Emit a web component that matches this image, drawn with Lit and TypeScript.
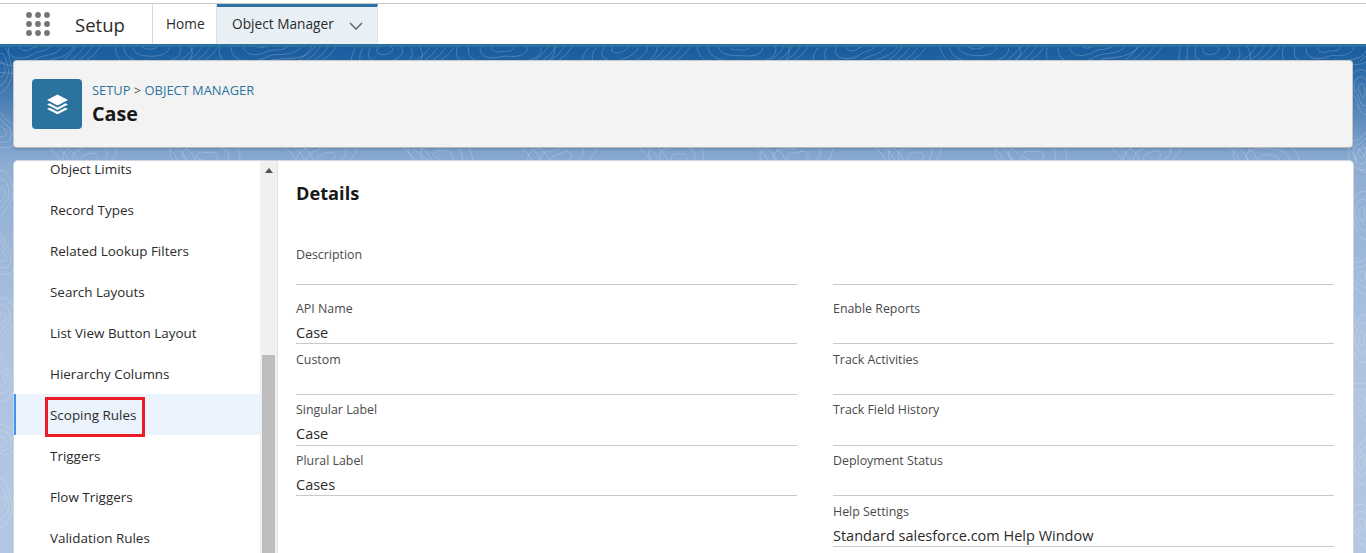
import { LitElement, html, css, svg } from "lit";
import { customElement } from "lit/decorators.js";

const MENU = ["Object Limits","Record Types","Related Lookup Filters","Search Layouts","List View Button Layout","Hierarchy Columns","Scoping Rules","Triggers","Flow Triggers","Validation Rules"];
const LEFT: [string,string,boolean?][] = [["Description","",true],["API Name","Case"],["Custom",""],["Singular Label","Case"],["Plural Label","Cases"]];
const RIGHT: [string,string,boolean?][] = [["","",true],["Enable Reports",""],["Track Activities",""],["Track Field History",""],["Deployment Status",""],["Help Settings","Standard salesforce.com Help Window"]];

/* Decorative topographic texture: concentric wobbly rings and diagonal hatching. */
function ring(cx: number, cy: number, r: number, seed: number, sx: number): string {
  const pts: string[] = [];
  for (let i = 0; i < 40; i++) {
    const a = (i / 40) * Math.PI * 2;
    const w = 1 + 0.2 * Math.sin(a * 2 + seed) + 0.12 * Math.sin(a * 3 + seed * 2.3);
    pts.push(`${(cx + Math.cos(a) * r * w * sx).toFixed(1)} ${(cy + Math.sin(a) * r * w).toFixed(1)}`);
  }
  return "M" + pts.join("L") + "Z";
}
function buildContours(): string[] {
  const out: string[] = [];
  let s = 1.7;
  const blob = (x: number, y: number, max: number, sx = 1.5) => {
    s += 1.37;
    for (let r = 6; r <= max; r += 7) out.push(ring(x, y, r, s, sx));
  };
  const hatch = (x: number, y: number, n: number, dx = -14, dy = 14, step = 8) => {
    for (let i = 0; i < n; i++) out.push(`M${x + i * step} ${y}q${dx / 2 + 3} ${dy / 2} ${dx} ${dy}`);
  };
  for (let x = 30; x < 1366; x += 118) {
    blob(x, 42 + (x % 7), 30);
    hatch(x + 46, 47, 4);
    blob(x + 60, 160 - (x % 5), 26);
    hatch(x + 20, 148, 3, 10, 13, 9);
  }
  for (let y = 70; y < 553; y += 62) {
    blob(2, y, 26, 0.55);
    blob(1362, y + 20, 26, 0.55);
  }
  return out;
}
const CONTOURS = buildContours();

@customElement("app-root")
export class AppRoot extends LitElement {
  static styles = css`
    :host { display: block; width: 1366px; height: 553px; overflow: hidden; position: relative; font-family: "Open Sans", "Noto Sans", sans-serif; color: #181818; }
    .page { height: 553px; display: flex; flex-direction: column; background: #fff; }
    .topline { height: 4px; box-sizing: border-box; border-bottom: 1px solid #c9c9c9; flex: none; }
    nav { height: 40px; flex: none; display: flex; align-items: stretch; background: #fff; }
    .launcher { width: 75px; flex: none; display: flex; align-items: center; padding-left: 26px; box-sizing: border-box; }
    .launcher svg { display: block; }
    .app { width: 77px; flex: none; box-sizing: border-box; font-size: 18.5px; line-height: 41px; color: #2b2b2b; }
    .tab { box-sizing: border-box; font-size: 13.7px; display: flex; align-items: center; color: #2b2b2b; }
    .home { width: 65px; border-left: 1px solid #dddbda; border-right: 1px solid #dddbda; padding-left: 13px; padding-bottom: 1px; }
    .om { width: 161px; background: #e8f0f5; border-top: 3px solid #2a739e; border-right: 1px solid #dce4ea; padding-left: 15px; padding-bottom: 4px; }
    .om svg { margin-left: 15px; margin-top: 4px; }
    .stage { flex: 1; min-height: 0; position: relative; background: linear-gradient(#1b5e9f 0, #1b5e9f 6px, #8eadd3 118px, #aec3e0 300px, #b3c7e2 100%); border-top: 3px solid #2a739e; padding: 13px 13px 0 13px; display: flex; flex-direction: column; gap: 13px; box-sizing: border-box; overflow: hidden; }
    .contours { position: absolute; left: 0; top: -47px; width: 1366px; height: 553px; pointer-events: none; }
    .contours path { fill: none; stroke: #fff; stroke-opacity: .2; stroke-width: 1; }
    .head { position: relative; height: 88px; flex: none; box-sizing: border-box; background: #f3f3f3; border-radius: 4px; border: 1px solid #c9c9c9; border-bottom-color: #b5b5b5; box-shadow: 0 2px 2px rgba(0,0,0,.1); padding: 18px; display: flex; gap: 10px; align-items: flex-start; }
    .tile { width: 50px; height: 50px; flex: none; background: #2a739e; border-radius: 4px; display: flex; align-items: center; justify-content: center; }
    .crumbs { font-size: 12.9px; line-height: 16px; color: #2a739e; margin-top: 3px; white-space: nowrap; }
    .crumbs .sep { color: #555; }
    h1 { margin: 3px 0 0; font-size: 19.7px; line-height: 26px; font-weight: 700; color: #181818; }
    .main { position: relative; flex: 1; min-height: 0; display: flex; margin-left: 1px; background: #fff; border-radius: 4px 4px 0 0; box-shadow: 0 0 0 1px #cdd5e0; overflow: hidden; }
    .side { width: 246px; flex: none; overflow: hidden; }
    .list { margin: -13px 0 0; padding: 0; list-style: none; }
    .list li { position: relative; height: 41px; box-sizing: border-box; padding-left: 36px; display: flex; align-items: center; font-size: 13.45px; color: #2b2b2b; }
    .list li.on { background: #ebf3fd; border-left: 2px solid #3b96f5; padding-left: 34px; }
    .mark { position: absolute; left: 29px; top: 3px; width: 100px; height: 40px; box-sizing: border-box; border: 3px solid #ed1c24; }
    .bar { width: 17px; flex: none; background: #f0f0f0; display: flex; flex-direction: column; align-items: center; position: relative; }
    .bar .up { width: 0; height: 0; border: 4px solid transparent; border-top: 0; border-bottom: 5px solid #505050; margin-top: 7px; }
    .bar .thumb { position: absolute; left: 2px; right: 2px; top: 194px; bottom: 0; background: #bdbdbd; }
    .bar-edge { width: 1px; flex: none; background: #e3e3e3; }
    .content { flex: 1; min-width: 0; padding: 20px 19px 0 18px; }
    h2 { margin: 0; font-size: 18.2px; line-height: 24px; font-weight: 700; color: #181818; }
    .cols { display: grid; grid-template-columns: 501px 501px; column-gap: 36px; margin-top: 9px; }
    .f { box-sizing: border-box; height: 50.85px; border-bottom: 1px solid #c9c9c9; padding-top: 6.7px; }
    .f.first { height: 71px; padding-top: 32px; margin-bottom: 8px; }
    .lab { font-size: 12.4px; line-height: 18px; color: #4a4a4a; }
    .val { font-size: 14.5px; line-height: 20px; color: #2b2b2b; margin-top: 5px; }
  `;

  private field([l, v, first]: [string,string,boolean?]) {
    return html`<div class="f ${first ? "first" : ""}">
      <div class="lab">${l}</div>
      ${v ? html`<div class="val">${v}</div>` : ""}
    </div>`;
  }

  render() {
    const dots = [0,1,2].flatMap(r => [0,1,2].map(c => svg`<circle cx=${3+c*9} cy=${3+r*9} r="2.9" fill="#747474"/>`));
    return html`<div class="page">
      <div class="topline"></div>
      <nav>
        <div class="launcher"><svg width="24" height="24" viewBox="0 0 24 24">${dots}</svg></div>
        <div class="app">Setup</div>
        <div class="tab home">Home</div>
        <div class="tab om">Object Manager
          <svg width="14" height="8" viewBox="0 0 14 8"><path d="M1 1l6 6 6-6" fill="none" stroke="#6b6b6b" stroke-width="1.6"/></svg>
        </div>
      </nav>
      <div class="stage">
        <svg class="contours" viewBox="0 0 1366 553">${CONTOURS.map(d => svg`<path d=${d}/>`)}</svg>
        <div class="head">
          <div class="tile">
            <svg width="23" height="23" viewBox="0 0 22 22">
              <path d="M11 1.5l10 5.2-10 5.2-10-5.2z" fill="#fff"/>
              <path d="M3.4 9.800L1 11l10 5.200L21 11l-2.400-1.200L11 13.800z" fill="#fff"/>
              <path d="M3.4 14L1 15.200l10 5.200 10-5.200L18.600 14 11 18z" fill="#fff"/>
            </svg>
          </div>
          <div>
            <div class="crumbs">SETUP <span class="sep">&gt;</span> OBJECT MANAGER</div>
            <h1>Case</h1>
          </div>
        </div>
        <div class="main">
          <div class="side">
            <ul class="list">
              ${MENU.map(m => m === "Scoping Rules"
                ? html`<li class="on">${m}<span class="mark"></span></li>`
                : html`<li>${m}</li>`)}
            </ul>
          </div>
          <div class="bar"><div class="up"></div><div class="thumb"></div></div>
          <div class="bar-edge"></div>
          <div class="content">
            <h2>Details</h2>
            <div class="cols">
              <div>${LEFT.map(f => this.field(f))}</div>
              <div>${RIGHT.map(f => this.field(f))}</div>
            </div>
          </div>
        </div>
      </div>
    </div>`;
  }
}
